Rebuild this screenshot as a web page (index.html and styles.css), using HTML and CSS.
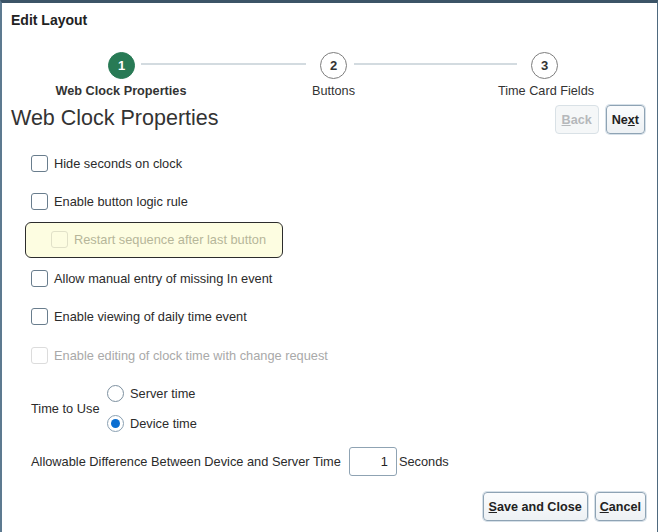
FILE: index.html
```html
<!DOCTYPE html>
<html>
<head>
<meta charset="utf-8">
<link rel="stylesheet" href="styles.css">
</head>
<body>
<div class="dialog">
  <div class="title">Edit Layout</div>
  <div class="train">
    <span class="dot active">1</span>
    <span class="line l1"></span>
    <span class="dot">2</span>
    <span class="line l2"></span>
    <span class="dot">3</span>
  </div>
  <div class="labels">
    <span class="lbl bold">Web Clock Properties</span>
    <span class="lbl">Buttons</span>
    <span class="lbl">Time Card Fields</span>
  </div>
  <div class="head">
    <h1>Web Clock Properties</h1>
    <div class="nav">
      <button class="btn disabled"><u>B</u>ack</button>
      <button class="btn primary">Ne<u>x</u>t</button>
    </div>
  </div>
  <div class="opts">
    <label class="row"><span class="cb"></span>Hide seconds on clock</label>
    <label class="row"><span class="cb"></span>Enable button logic rule</label>
    <label class="row hl"><span class="cb off"></span>Restart sequence after last button</label>
    <label class="row"><span class="cb"></span>Allow manual entry of missing In event</label>
    <label class="row"><span class="cb"></span>Enable viewing of daily time event</label>
    <label class="row dim"><span class="cb off"></span>Enable editing of clock time with change request</label>
  </div>
  <div class="time">
    <span class="tlabel">Time to Use</span>
    <div class="radios">
      <label class="radio"><span class="rb"></span>Server time</label>
      <label class="radio"><span class="rb on"></span>Device time</label>
    </div>
  </div>
  <div class="diff">
    <span>Allowable Difference Between Device and Server Time</span>
    <span class="input">1</span>
    <span class="sec">Seconds</span>
  </div>
  <div class="foot">
    <button class="btn"><u>S</u>ave and Close</button>
    <button class="btn small"><u>C</u>ancel</button>
  </div>
</div>
</body>
</html>
```
FILE: styles.css
```css
html, body {
  margin: 0;
  padding: 0;
  background: #fff;
}
body {
  width: 661px;
  height: 532px;
  overflow: hidden;
  font-family: "Liberation Sans", Arial, sans-serif;
  color: #2b2b2b;
}
.dialog {
  width: 655px;
  height: 529px;
  border-top: 3px solid #3c5467;
  border-left: 2px solid #5d7a90;
  border-right: 1px solid #4f6a7f;
  box-sizing: content-box;
}
.title {
  font-weight: bold;
  font-size: 14px;
  padding: 9px 0 0 9px;
  height: 20px;
  color: #222;
}
.train {
  display: flex;
  align-items: center;
  margin-top: 19px;
  padding-left: 106px;
  height: 28px;
}
.dot {
  width: 25px;
  height: 25px;
  border-radius: 50%;
  border: 1.5px solid #7d7d7d;
  display: flex;
  align-items: center;
  justify-content: center;
  font-size: 13px;
  font-weight: bold;
  color: #333;
  background: #fff;
}
.dot.active {
  background: #287a55;
  border-color: #287a55;
  color: #fff;
}
.line {
  height: 2px;
  background: #d3dbe0;
  margin-top: -3px;
}
.l1 { margin-left: 6px; width: 165px; margin-right: 14px; }
.l2 { margin-left: 7px; width: 163px; margin-right: 14px; }
.labels {
  display: grid;
  grid-template-columns: 212px 213px 212px;
  padding-left: 13px;
  margin-top: 5px;
  font-size: 12.7px;
  color: #333;
}
.lbl { text-align: center; }
.bold { font-weight: bold; }
.head {
  display: flex;
  justify-content: space-between;
  align-items: center;
  padding: 0 12px 0 9px;
  margin-top: 5px;
}
h1 {
  margin: 0;
  font-weight: normal;
  font-size: 21.5px;
  color: #333;
}
.nav { display: flex; gap: 7px; margin-top: 2px; }
.btn {
  font-family: "Liberation Sans", Arial, sans-serif;
  font-weight: bold;
  font-size: 12.6px;
  color: #222;
  background: linear-gradient(#fbfcfd, #edf1f4);
  border: 1px solid #8ea3b4;
  border-radius: 4px;
  height: 29px;
  padding: 0 5px;
  box-shadow: 0 0 0 1px #d6e0e8;
}
.btn.disabled {
  color: #b5b8bb;
  border-color: #d9e1e6;
  background: #f5f7f8;
  box-shadow: none;
  padding: 0 6px;
}
.btn.primary { padding: 0 5px; }
.btn.small { padding: 0 4px; }
.opts {
  margin-top: 10px;
  padding-left: 29px;
  display: flex;
  flex-direction: column;
}
.row {
  display: flex;
  align-items: center;
  height: 38.4px;
  font-size: 12.8px;
  color: #2b2b2b;
}
.cb {
  border: 1.5px solid #697d8d;
  border-radius: 3px;
  margin-right: 6px;
  box-sizing: border-box;
  flex: none;
  width: 17px;
  height: 17px;
}
.cb.off { border-color: #dcdcdc; }
.hl {
  margin-left: -6px;
  width: 258px;
  height: 36px;
  box-sizing: border-box;
  padding-left: 25px;
  background: #fdfde1;
  border: 1px solid #2c2c2c;
  border-radius: 6px;
  color: #b6b699;
  margin-top: 1px;
  margin-bottom: 1.4px;
}
.hl .cb { border-color: #e1e1c8; }
.dim { color: #a9a9a9; }
.time {
  display: flex;
  align-items: center;
  padding-left: 29px;
  margin-top: 11px;
  font-size: 12.8px;
}
.tlabel { width: 76px; }
.radios { display: flex; flex-direction: column; gap: 13px; }
.radio { display: flex; align-items: center; height: 17px; }
.rb {
  width: 17px;
  height: 17px;
  border-radius: 50%;
  border: 1.5px solid #7d909f;
  box-sizing: border-box;
  margin-right: 6px;
  display: flex;
  align-items: center;
  justify-content: center;
  background: #fff;
}
.rb.on { border-color: #8aa0b2; }
.rb.on::after {
  content: "";
  width: 9px;
  height: 9px;
  border-radius: 50%;
  background: #0a6ed1;
}
.diff {
  display: flex;
  align-items: center;
  padding-left: 29px;
  margin-top: 15px;
  font-size: 12.8px;
}
.input {
  width: 48px;
  height: 29px;
  box-sizing: border-box;
  border: 1px solid #8fa3b3;
  border-radius: 3px;
  margin-left: 8px;
  display: flex;
  align-items: center;
  justify-content: flex-end;
  padding-right: 8px;
  color: #222;
}
.sec { margin-left: 2px; }
.foot {
  display: flex;
  justify-content: flex-end;
  gap: 7px;
  padding-right: 11px;
  margin-top: 16px;
}
```
